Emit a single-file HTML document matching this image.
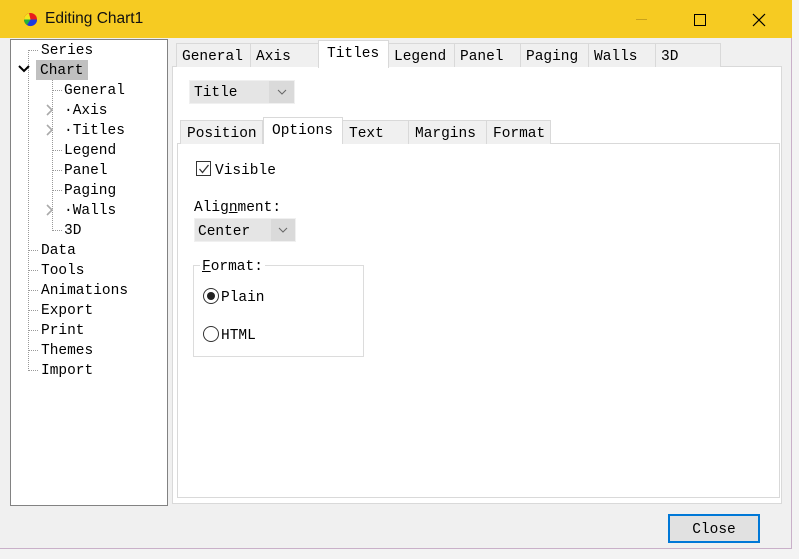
<!DOCTYPE html>
<html><head><meta charset="utf-8"><style>
*{margin:0;padding:0;box-sizing:border-box}
body{width:799px;height:559px;background:#f3f3f3;position:relative;overflow:hidden;font-family:"Liberation Mono","Noto Sans CJK SC",monospace;font-size:14.5px;color:#000}
.a{position:absolute}
.win{left:0;top:0;width:792px;height:549px;background:#f0f0f0;border-right:1px solid #c9b0c9;border-bottom:1px solid #c9b0c9}
.title{left:0;top:0;width:792px;height:38px;background:#f6cb22}
.tt{left:45px;top:10px;font-family:"Liberation Sans",sans-serif;font-size:15.5px;color:#111}
.tree{left:10px;top:39px;width:158px;height:467px;background:#fff;border:1px solid #828282}
.ti{position:absolute;white-space:nowrap;line-height:18px}
.tab{position:absolute;top:43px;height:24px;background:#f0f0f0;border:1px solid #d9d9d9;border-bottom:none;padding-left:5px;line-height:27px}
.tab.sel{top:40px;height:28px;background:#fff;border-color:#d9d9d9;line-height:26px}
.itab{position:absolute;top:120px;height:24px;background:#f0f0f0;border:1px solid #d9d9d9;border-bottom:none;padding-left:6px;line-height:26px}
.itab.sel{top:117px;height:27px;background:#fff;line-height:26px}
.hd{border-top:1px dotted #999;width:10px;height:0}
.vd{border-left:1px dotted #999;width:0}
</style></head><body>
<div class="a win"></div>
<div class="a title"></div>
<svg class="a" style="left:23px;top:12px" width="15" height="15" viewBox="0 0 15 15"><circle cx="7.5" cy="7.5" r="6.5" fill="#e81c1c"/><path d="M7.5 7.5L14 7.5A6.5 6.5 0 0 1 4 13Z" fill="#1a3be0"/><path d="M7.5 7.5L4 13A6.5 6.5 0 0 1 1 7.5Z" fill="#22b33a"/><path d="M7.5 7.5L1 7.5A6.5 6.5 0 0 1 6 1.2Z" fill="#f3e51e"/></svg>
<div class="a tt">Editing Chart1</div>
<div class="a" style="left:636px;top:19px;width:11px;height:1px;background:#c9a21a"></div>
<div class="a" style="left:694px;top:14px;width:12px;height:12px;border:1.3px solid #000"></div>
<svg class="a" style="left:752px;top:13px" width="14" height="14"><path d="M1 1L13 13M13 1L1 13" stroke="#000" stroke-width="1.2"/></svg>

<div class="a tree">
<div class="a vd" style="left:17px;top:10px;height:321px"></div>
<div class="a vd" style="left:41px;top:40px;height:151px"></div>
</div>
<div class="a" style="left:10px;top:39px;width:158px;height:467px">
<div class="a hd" style="left:18px;top:11px"></div><div class="ti" style="left:31px;top:3px">Series</div>
<svg class="a" style="left:8px;top:25px" width="12" height="10"><path d="M1 2L6 7L11 2" stroke="#000" stroke-width="2" fill="none"/></svg>
<div class="ti" style="left:26px;top:21px;background:#c0c0c0;padding:2px 4px 0;height:20px">Chart</div>
<div class="a hd" style="left:42px;top:51px"></div><div class="ti" style="left:54px;top:43px">General</div>
<svg class="a" style="left:36px;top:65px" width="8" height="12"><path d="M1 1L6 6L1 11" stroke="#aaa" stroke-width="1.6" fill="none"/></svg><div class="ti" style="left:54px;top:63px">·Axis</div>
<svg class="a" style="left:36px;top:85px" width="8" height="12"><path d="M1 1L6 6L1 11" stroke="#aaa" stroke-width="1.6" fill="none"/></svg><div class="ti" style="left:54px;top:83px">·Titles</div>
<div class="a hd" style="left:42px;top:111px"></div><div class="ti" style="left:54px;top:103px">Legend</div>
<div class="a hd" style="left:42px;top:131px"></div><div class="ti" style="left:54px;top:123px">Panel</div>
<div class="a hd" style="left:42px;top:151px"></div><div class="ti" style="left:54px;top:143px">Paging</div>
<svg class="a" style="left:36px;top:165px" width="8" height="12"><path d="M1 1L6 6L1 11" stroke="#aaa" stroke-width="1.6" fill="none"/></svg><div class="ti" style="left:54px;top:163px">·Walls</div>
<div class="a hd" style="left:42px;top:191px"></div><div class="ti" style="left:54px;top:183px">3D</div>
<div class="a hd" style="left:18px;top:211px"></div><div class="ti" style="left:31px;top:203px">Data</div>
<div class="a hd" style="left:18px;top:231px"></div><div class="ti" style="left:31px;top:223px">Tools</div>
<div class="a hd" style="left:18px;top:251px"></div><div class="ti" style="left:31px;top:243px">Animations</div>
<div class="a hd" style="left:18px;top:271px"></div><div class="ti" style="left:31px;top:263px">Export</div>
<div class="a hd" style="left:18px;top:291px"></div><div class="ti" style="left:31px;top:283px">Print</div>
<div class="a hd" style="left:18px;top:311px"></div><div class="ti" style="left:31px;top:303px">Themes</div>
<div class="a hd" style="left:18px;top:331px"></div><div class="ti" style="left:31px;top:323px">Import</div>
</div>

<div class="a" style="left:172px;top:66px;width:610px;height:438px;background:#fff;border:1px solid #d9d9d9"></div>
<div class="tab" style="left:176px;width:75px">General</div>
<div class="tab" style="left:250px;width:69px">Axis</div>
<div class="tab" style="left:388px;width:67px">Legend</div>
<div class="tab" style="left:454px;width:67px">Panel</div>
<div class="tab" style="left:520px;width:69px">Paging</div>
<div class="tab" style="left:588px;width:68px">Walls</div>
<div class="tab" style="left:655px;width:66px">3D</div>
<div class="tab sel" style="left:318px;width:71px;padding-left:8px">Titles</div>

<div class="a" style="left:189px;top:80px;width:106px;height:24px;background:#e5e5e5;border:1px solid #f0f0f0"></div>
<div class="a" style="left:194px;top:83px;line-height:20px">Title</div>
<div class="a" style="left:269px;top:81px;width:25px;height:22px;background:#dadada"></div>
<svg class="a" style="left:277px;top:89px" width="10" height="6"><path d="M1 1L5 5L9 1" stroke="#666" fill="none"/></svg>

<div class="a" style="left:177px;top:143px;width:603px;height:355px;background:#fff;border:1px solid #d9d9d9"></div>
<div class="itab" style="left:180px;width:83px">Position</div>
<div class="itab" style="left:342px;width:67px">Text</div>
<div class="itab" style="left:408px;width:79px">Margins</div>
<div class="itab" style="left:486px;width:65px">Format</div>
<div class="itab sel" style="left:263px;width:80px;padding-left:8px">Options</div>

<div class="a" style="left:196px;top:161px;width:15px;height:15px;border:1px solid #333;background:#fff"></div>
<svg class="a" style="left:198px;top:163px" width="12" height="12"><path d="M1.5 6L4.5 9.5L10.5 2" stroke="#333" stroke-width="1.3" fill="none"/></svg>
<div class="a" style="left:215px;top:162px;line-height:18px">Visible</div>
<div class="a" style="left:194px;top:199px;line-height:18px">Alig<u>n</u>ment:</div>
<div class="a" style="left:194px;top:218px;width:102px;height:24px;background:#e5e5e5;border:1px solid #f0f0f0"></div>
<div class="a" style="left:198px;top:222px;line-height:20px">Center</div>
<div class="a" style="left:271px;top:219px;width:24px;height:22px;background:#dadada"></div>
<svg class="a" style="left:278px;top:227px" width="10" height="6"><path d="M1 1L5 5L9 1" stroke="#666" fill="none"/></svg>
<div class="a" style="left:193px;top:265px;width:171px;height:92px;border:1px solid #dcdcdc"></div>
<div class="a" style="left:200px;top:259px;background:#fff;padding:0 2px;line-height:16px"><u>F</u>ormat:</div>
<div class="a" style="left:203px;top:288px;width:16px;height:16px;border:1px solid #333;border-radius:50%;background:#fff"></div>
<div class="a" style="left:207px;top:292px;width:8px;height:8px;border-radius:50%;background:#222"></div>
<div class="a" style="left:221px;top:289px;line-height:18px">Plain</div>
<div class="a" style="left:203px;top:326px;width:16px;height:16px;border:1px solid #333;border-radius:50%;background:#fff"></div>
<div class="a" style="left:221px;top:327px;line-height:18px">HTML</div>

<div class="a" style="left:668px;top:514px;width:92px;height:29px;background:#e1e1e1;border:2px solid #0078d7;text-align:center;line-height:28px">Close</div>
</body></html>
